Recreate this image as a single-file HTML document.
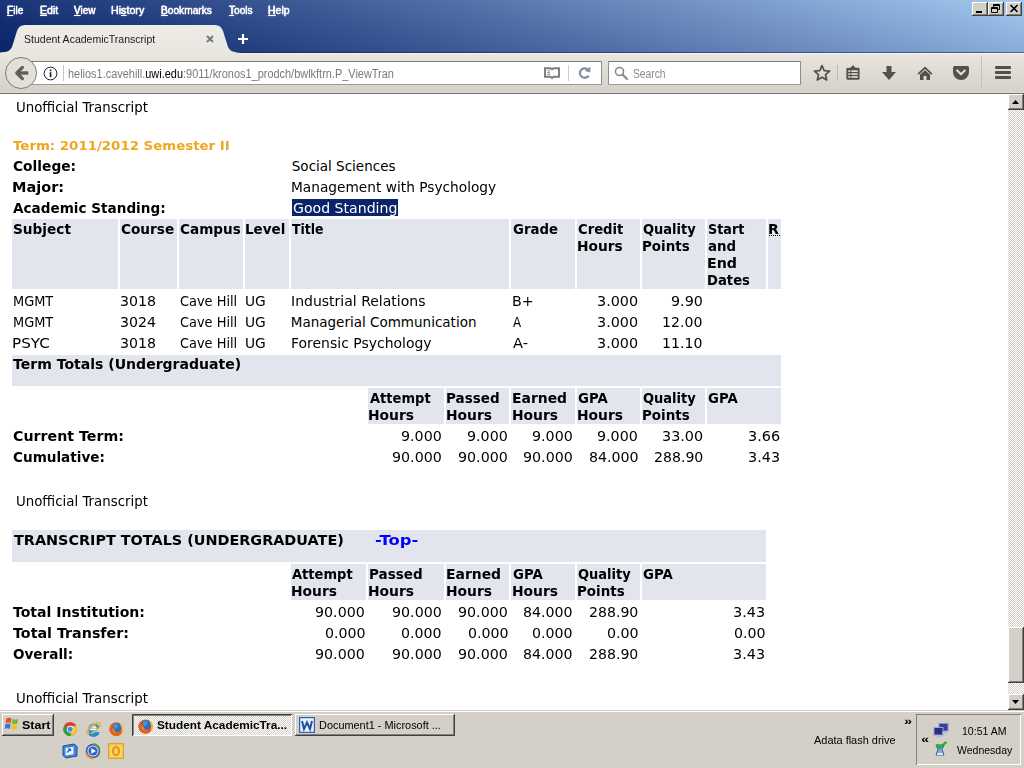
<!DOCTYPE html>
<html><head><meta charset="utf-8"><title>Student AcademicTranscript</title>
<style>
html,body{margin:0;padding:0;}
body{width:1024px;height:768px;overflow:hidden;position:relative;background:#fff;font-family:"DejaVu Sans","Liberation Sans",sans-serif;}
#chrome{position:absolute;left:0;top:0;width:1024px;height:94px;overflow:hidden;}
#titlegrad{position:absolute;left:0;top:0;width:1024px;height:53px;background:linear-gradient(16deg,#0a246a 0%,#142e72 10%,#213c7d 20%,#2f4b8a 30%,#3e5b97 40%,#4e6ca4 50%,#5f7eb3 60%,#7090c1 70%,#81a3d1 80%,#93b6e0 90%,#a6caf0 100%);}
.u{position:absolute;white-space:nowrap;transform-origin:0 0;font-family:"Liberation Sans","DejaVu Sans",sans-serif;font-size:11px;line-height:13px;color:#000;}
.menu{color:#fff;-webkit-text-stroke:0.3px #fff;text-shadow:0 0 1px rgba(255,255,255,.9),0 0 2px rgba(255,255,255,.35);}
.menu u{text-decoration:underline;text-decoration-thickness:1px;text-underline-offset:1px;}
#navbar{position:absolute;left:0;top:53px;width:1024px;height:40px;background:linear-gradient(to bottom,#e9e7e0 0%,#e3e1da 25%,#dddbd4 50%,#d8d6cf 75%,#d5d2cb 95%,#dedcd6 100%);border-bottom:1px solid #72706b;}
.field{position:absolute;top:61px;height:22px;background:#fff;border:1px solid #8f8d88;border-top-color:#7f7d78;border-bottom-color:#9c9a95;border-radius:1px;}
#content{position:absolute;left:0;top:94px;width:1008px;height:617px;background:#fff;overflow:hidden;}
.t{position:absolute;white-space:nowrap;transform-origin:0 0;font-size:13.5px;line-height:17px;color:#000;}
.b{font-weight:bold;}
.cap{color:#f0a521;}
.hc{position:absolute;background:#e3e5ee;}
#taskbar{position:absolute;left:0;top:710px;width:1024px;height:58px;background:#d4d0c8;border-top:1px solid #d4d0c8;box-shadow:inset 0 1px 0 #fff;}
.raised{position:absolute;background:#d4d0c8;box-shadow:inset -1px -1px 0 #404040,inset 1px 1px 0 #fff,inset -2px -2px 0 #808080,inset 2px 2px 0 #d4d0c8;}
.sunken{position:absolute;background:#d4d0c8;box-shadow:inset 1px 1px 0 #404040,inset -1px -1px 0 #fff,inset 2px 2px 0 #808080,inset -2px -2px 0 #d4d0c8;}
.checker{background-color:#fff;background-image:linear-gradient(45deg,#d4d0c8 25%,transparent 25%,transparent 75%,#d4d0c8 75%),linear-gradient(45deg,#d4d0c8 25%,transparent 25%,transparent 75%,#d4d0c8 75%);background-size:2px 2px;background-position:0 0,1px 1px;}
svg{position:absolute;overflow:visible;}
</style></head><body>
<div id="chrome">
<div id="titlegrad"></div>
<div class="raised" style="left:972px;top:2px;width:16px;height:14px"></div><div style="position:absolute;left:976px;top:11px;width:6px;height:2px;background:#000"></div>
<div class="raised" style="left:988px;top:2px;width:16px;height:14px"></div><svg style="left:991px;top:4px" width="10" height="10" viewBox="0 0 10 10"><path d="M2.5,0.5 h6 v5 h-6 z M2.5,1.5 h6" fill="none" stroke="#000" stroke-width="1"/><path d="M0.5,3.5 h6 v5 h-6 z" fill="#d4d0c8" stroke="#000"/><path d="M0.5,4.5 h6" stroke="#000"/></svg>
<div class="raised" style="left:1006px;top:2px;width:16px;height:14px"></div><svg style="left:1010px;top:5px" width="8" height="7" viewBox="0 0 8 7"><path d="M0.5,0 L7.5,7 M7.5,0 L0.5,7" stroke="#000" stroke-width="1.6" fill="none"/></svg>
<div class="u menu" style="left:7.30px;top:4px;transform:scaleX(0.9144);"><u>F</u>ile</div>
<div class="u menu" style="left:39.60px;top:4px;transform:scaleX(0.9578);"><u>E</u>dit</div>
<div class="u menu" style="left:73.80px;top:4px;transform:scaleX(0.9030);"><u>V</u>iew</div>
<div class="u menu" style="left:111.30px;top:4px;transform:scaleX(0.9705);">Hi<u>s</u>tory</div>
<div class="u menu" style="left:161.10px;top:4px;transform:scaleX(0.9241);"><u>B</u>ookmarks</div>
<div class="u menu" style="left:228.50px;top:4px;transform:scaleX(0.9206);"><u>T</u>ools</div>
<div class="u menu" style="left:268.10px;top:4px;transform:scaleX(0.9509);"><u>H</u>elp</div>
<svg style="left:0;top:0" width="260" height="60" viewBox="0 0 260 60"><defs><linearGradient id="tg" x1="0" y1="25" x2="0" y2="53" gradientUnits="userSpaceOnUse"><stop offset="0" stop-color="#eeece7"/><stop offset="1" stop-color="#e9e7e0"/></linearGradient></defs><path d="M0,53 L0,52.5 C7,52.2 10,51 12,47 L17,31 C18.5,27 21,25 26,25 L214,25 C219,25 221.5,27 223,31 L228,47 C230,51 233,52.2 240,52.5 L240,53 Z" fill="url(#tg)"/><path d="M207,36 L213,42 M213,36 L207,42" stroke="#7a7a7a" stroke-width="2" fill="none"/><path d="M243,34 V44 M238,39 H248" stroke="#fff" stroke-width="2.2" fill="none"/></svg>
<div class="u" style="left:23.60px;top:33px;transform:scaleX(0.9564);color:#1a1a1a">Student AcademicTranscript</div>
<div id="navbar"></div>
<div style="position:absolute;left:236px;top:52px;width:788px;height:1px;background:rgba(8,24,64,.5)"></div><div style="position:absolute;left:240px;top:53px;width:784px;height:1px;background:#f4f5f9"></div>
<div class="field" style="left:27px;width:573px"></div>
<div class="field" style="left:608px;width:191px"></div>
<svg style="left:4px;top:56px" width="34" height="34" viewBox="0 0 34 34"><circle cx="17" cy="17" r="15.5" fill="#e2e0d9" stroke="#7d7b76" stroke-width="1"/><path d="M24.3,17 H13.5" fill="none" stroke="#5f5d57" stroke-width="3.4" stroke-linecap="butt"/><path d="M18.4,11.4 L12.8,17 L18.4,22.6" fill="none" stroke="#5f5d57" stroke-width="3.2" stroke-linecap="round" stroke-linejoin="round"/></svg>
<svg style="left:42.6px;top:65.6px" width="15" height="15" viewBox="0 0 15 15"><circle cx="7.5" cy="7.5" r="6.4" fill="none" stroke="#222" stroke-width="1"/><rect x="6.7" y="6.2" width="1.7" height="5" fill="#222"/><rect x="6.7" y="3.5" width="1.7" height="1.7" fill="#222"/></svg>
<div style="position:absolute;left:63px;top:65px;width:1px;height:16px;background:#c8c6c2"></div>
<svg style="left:544px;top:67px" width="16" height="12" viewBox="0 0 16 12"><path d="M1,1.2 H6.4 L8,2.4 L9.6,1.2 H15 V9.8 H9.6 L8,11 L6.4,9.8 H1 Z" fill="none" stroke="#7b7b7b" stroke-width="1.9" stroke-linejoin="miter"/><path d="M3.4,3.9h2.6M3.4,5.6h2.6M3.4,7.3h2.6" stroke="#7b7b7b" stroke-width="0.9"/></svg>
<div style="position:absolute;left:568px;top:65px;width:1px;height:16px;background:#d0cec9"></div>
<svg style="left:578px;top:66px" width="14" height="14" viewBox="0 0 14 14"><path d="M10.6,9.6 A4.7,4.7 0 1 1 9.4,3.2" fill="none" stroke="#8691a6" stroke-width="2.3"/><path d="M6.8,4.9 L12.4,0.6 L12.4,6.6 Z" fill="#8691a6"/></svg>
<svg style="left:614px;top:66px" width="15" height="14" viewBox="0 0 15 14"><circle cx="5.5" cy="5.5" r="4" fill="none" stroke="#8a8a8a" stroke-width="1.6"/><path d="M8.5,8.5 L13,13" stroke="#8a8a8a" stroke-width="2.2" stroke-linecap="round"/></svg>
<svg style="left:813px;top:64px" width="18" height="18" viewBox="0 0 18 18"><path d="M9,1.6 L11.2,6.6 L16.6,7.1 L12.5,10.7 L13.7,16 L9,13.2 L4.3,16 L5.5,10.7 L1.4,7.1 L6.8,6.6 Z" fill="none" stroke="#53514a" stroke-width="1.7" stroke-linejoin="round"/></svg>
<div style="position:absolute;left:837px;top:65px;width:1px;height:16px;background:#b9b7b2"></div>
<svg style="left:846px;top:65px" width="14" height="15" viewBox="0 0 14 15"><rect x="0.4" y="2.8" width="13.2" height="12" rx="1.4" fill="#53514a"/><path d="M4.3,3 L7,0.1 L9.7,3 Z" fill="#53514a"/><rect x="2.3" y="5.3" width="9.4" height="1.7" fill="#dfddd6"/><rect x="2.3" y="8.2" width="9.4" height="1.7" fill="#dfddd6"/><rect x="2.3" y="11.1" width="9.4" height="1.7" fill="#dfddd6"/><rect x="4.3" y="5" width="1" height="8" fill="#53514a"/></svg>
<svg style="left:882px;top:66px" width="14" height="14" viewBox="0 0 14 14"><path d="M4.5,0 H9.5 V6 H14 L7,14 L0,6 H4.5 Z" fill="#53514a"/></svg>
<svg style="left:917px;top:66px" width="16" height="14" viewBox="0 0 16 14"><path d="M8,0.5 L15.5,7.5 L14.3,8.7 L8,3 L1.7,8.7 L0.5,7.5 Z" fill="#53514a"/><path d="M3,8.5 L8,4.2 L13,8.5 V14 H9.5 V10 H6.5 V14 H3 Z" fill="#53514a"/></svg>
<svg style="left:953px;top:66px" width="16" height="14" viewBox="0 0 16 14"><path d="M1.5,0 H14.5 Q16,0 16,1.5 V6 A8,8 0 0 1 0,6 V1.5 Q0,0 1.5,0 Z" fill="#53514a"/><path d="M4.2,4.5 L8,8.3 L11.8,4.5" fill="none" stroke="#dddbd4" stroke-width="2.2" stroke-linecap="round" stroke-linejoin="round"/></svg>
<div style="position:absolute;left:981px;top:56px;width:1px;height:32px;background:#c4c2bd"></div>
<div style="position:absolute;left:995px;top:66px;width:16px;height:3px;background:#53514a;border-radius:1px;box-shadow:0 5px 0 #53514a,0 10px 0 #53514a"></div>
<div class="u" style="left:68.30px;top:68px;font-size:12px;transform:scaleX(0.9121);color:#7a7a7a">helios1.cavehill.<span style="color:#000">uwi.edu</span>:9011/kronos1_prodch/bwlkftrn.P_ViewTran</div>
<div class="u" style="left:632.90px;top:68px;font-size:12px;transform:scaleX(0.8568);color:#8a8a8a">Search</div>
</div>
<div id="content">
<div class="hc" style="left:292px;top:105px;width:106px;height:17px;background:#0a246a"></div>
<div class="hc" style="left:12px;top:125px;width:106px;height:70px"></div>
<div class="hc" style="left:120px;top:125px;width:57px;height:70px"></div>
<div class="hc" style="left:179px;top:125px;width:64px;height:70px"></div>
<div class="hc" style="left:245px;top:125px;width:43.5px;height:70px"></div>
<div class="hc" style="left:291px;top:125px;width:218px;height:70px"></div>
<div class="hc" style="left:511px;top:125px;width:63.5px;height:70px"></div>
<div class="hc" style="left:577px;top:125px;width:63px;height:70px"></div>
<div class="hc" style="left:642px;top:125px;width:62.5px;height:70px"></div>
<div class="hc" style="left:706.5px;top:125px;width:59.0px;height:70px"></div>
<div class="hc" style="left:768px;top:125px;width:12.5px;height:70px"></div>
<div style="position:absolute;left:769px;top:141px;width:11px;height:0;border-top:1px dotted #000"></div>
<div class="hc" style="left:12px;top:260.5px;width:768.5px;height:31.0px"></div>
<div class="hc" style="left:368px;top:294px;width:75.5px;height:36px"></div>
<div class="hc" style="left:446px;top:294px;width:63px;height:36px"></div>
<div class="hc" style="left:511px;top:294px;width:63.5px;height:36px"></div>
<div class="hc" style="left:577px;top:294px;width:63px;height:36px"></div>
<div class="hc" style="left:642px;top:294px;width:62.5px;height:36px"></div>
<div class="hc" style="left:706.5px;top:294px;width:74.0px;height:36px"></div>
<div class="hc" style="left:12px;top:436px;width:754px;height:31.5px"></div>
<div class="hc" style="left:291px;top:470px;width:75px;height:36px"></div>
<div class="hc" style="left:368px;top:470px;width:75.5px;height:36px"></div>
<div class="hc" style="left:446px;top:470px;width:63px;height:36px"></div>
<div class="hc" style="left:511px;top:470px;width:63.5px;height:36px"></div>
<div class="hc" style="left:577px;top:470px;width:63px;height:36px"></div>
<div class="hc" style="left:642px;top:470px;width:124px;height:36px"></div>
<div class="t" style="left:15.91px;top:5px;transform:scaleX(0.9879);">Unofficial Transcript</div>
<div class="t b cap" style="left:13.40px;top:43px;font-size:12.6px;transform:scaleX(1.0593);">Term: 2011/2012 Semester II</div>
<div class="t b" style="left:13.40px;top:64px;transform:scaleX(1.0213);">College:</div>
<div class="t" style="left:291.80px;top:64px;">Social Sciences</div>
<div class="t b" style="left:12.33px;top:85px;transform:scaleX(1.0737);">Major:</div>
<div class="t" style="left:290.78px;top:85px;transform:scaleX(1.0164);">Management with Psychology</div>
<div class="t b" style="left:13.40px;top:106px;transform:scaleX(1.0064);">Academic Standing:</div>
<div class="t" style="left:292.60px;top:106px;transform:scaleX(1.0442);color:#fff">Good Standing</div>
<div class="t b" style="left:13.30px;top:127px;transform:scaleX(1.0124);">Subject</div>
<div class="t b" style="left:121.00px;top:127px;transform:scaleX(1.0098);">Course</div>
<div class="t b" style="left:179.80px;top:127px;transform:scaleX(1.0057);">Campus</div>
<div class="t b" style="left:244.90px;top:127px;transform:scaleX(1.0022);">Level</div>
<div class="t b" style="left:291.80px;top:127px;transform:scaleX(0.9258);">Title</div>
<div class="t b" style="left:512.70px;top:127px;transform:scaleX(0.9844);">Grade</div>
<div class="t b" style="left:577.90px;top:127px;transform:scaleX(0.9763);">Credit</div>
<div class="t b" style="left:576.88px;top:144px;transform:scaleX(1.0196);">Hours</div>
<div class="t b" style="left:642.50px;top:127px;transform:scaleX(0.9635);">Quality</div>
<div class="t b" style="left:641.50px;top:144px;transform:scaleX(0.9966);">Points</div>
<div class="t b" style="left:707.60px;top:127px;transform:scaleX(0.9450);">Start</div>
<div class="t b" style="left:707.60px;top:144px;transform:scaleX(0.9884);">and</div>
<div class="t b" style="left:706.55px;top:161px;transform:scaleX(1.0547);">End</div>
<div class="t b" style="left:706.62px;top:178px;transform:scaleX(0.9761);">Dates</div>
<div class="t b" style="left:768.25px;top:127px;transform:scaleX(1.0500);">R</div>
<div class="t" style="left:12.64px;top:199px;transform:scaleX(0.9579);">MGMT</div>
<div class="t" style="left:120.15px;top:199px;transform:scaleX(1.0468);">3018</div>
<div class="t" style="left:180.00px;top:199px;transform:scaleX(0.9586);">Cave Hill</div>
<div class="t" style="left:244.88px;top:199px;transform:scaleX(1.0222);">UG</div>
<div class="t" style="left:290.76px;top:199px;transform:scaleX(1.0376);">Industrial Relations</div>
<div class="t" style="left:511.64px;top:199px;transform:scaleX(1.0569);">B+</div>
<div class="t" style="left:596.74px;top:199px;transform:scaleX(1.0632);">3.000</div>
<div class="t" style="left:671.00px;top:199px;transform:scaleX(1.0587);">9.90</div>
<div class="t" style="left:12.64px;top:220px;transform:scaleX(0.9579);">MGMT</div>
<div class="t" style="left:120.15px;top:220px;transform:scaleX(1.0468);">3024</div>
<div class="t" style="left:180.00px;top:220px;transform:scaleX(0.9586);">Cave Hill</div>
<div class="t" style="left:244.88px;top:220px;transform:scaleX(1.0222);">UG</div>
<div class="t" style="left:290.80px;top:220px;">Managerial Communication</div>
<div class="t" style="left:512.70px;top:220px;transform:scaleX(0.8800);">A</div>
<div class="t" style="left:596.74px;top:220px;transform:scaleX(1.0632);">3.000</div>
<div class="t" style="left:662.46px;top:220px;transform:scaleX(1.0443);">12.00</div>
<div class="t" style="left:12.48px;top:241px;transform:scaleX(1.1236);">PSYC</div>
<div class="t" style="left:120.15px;top:241px;transform:scaleX(1.0468);">3018</div>
<div class="t" style="left:180.00px;top:241px;transform:scaleX(0.9586);">Cave Hill</div>
<div class="t" style="left:244.88px;top:241px;transform:scaleX(1.0222);">UG</div>
<div class="t" style="left:290.77px;top:241px;transform:scaleX(1.0348);">Forensic Psychology</div>
<div class="t" style="left:512.70px;top:241px;transform:scaleX(1.0833);">A-</div>
<div class="t" style="left:596.74px;top:241px;transform:scaleX(1.0632);">3.000</div>
<div class="t" style="left:662.46px;top:241px;transform:scaleX(1.0443);">11.10</div>
<div class="t b" style="left:13.40px;top:262px;transform:scaleX(1.0399);">Term Totals (Undergraduate)</div>
<div class="t b" style="left:369.50px;top:296px;transform:scaleX(0.9677);">Attempt</div>
<div class="t b" style="left:368.47px;top:313px;transform:scaleX(1.0264);">Hours</div>
<div class="t b" style="left:446.10px;top:296px;transform:scaleX(1.0025);">Passed</div>
<div class="t b" style="left:446.07px;top:313px;transform:scaleX(1.0264);">Hours</div>
<div class="t b" style="left:511.77px;top:296px;transform:scaleX(1.0298);">Earned</div>
<div class="t b" style="left:511.77px;top:313px;transform:scaleX(1.0264);">Hours</div>
<div class="t b" style="left:578.00px;top:296px;transform:scaleX(0.9858);">GPA</div>
<div class="t b" style="left:576.97px;top:313px;transform:scaleX(1.0264);">Hours</div>
<div class="t b" style="left:642.50px;top:296px;transform:scaleX(0.9635);">Quality</div>
<div class="t b" style="left:641.50px;top:313px;transform:scaleX(0.9966);">Points</div>
<div class="t b" style="left:707.60px;top:296px;transform:scaleX(0.9858);">GPA</div>
<div class="t b" style="left:13.40px;top:334px;transform:scaleX(1.0524);">Current Term:</div>
<div class="t b" style="left:13.40px;top:355px;transform:scaleX(1.0059);">Cumulative:</div>
<div class="t" style="left:401.00px;top:334px;transform:scaleX(1.0563);">9.000</div>
<div class="t" style="left:467.30px;top:334px;transform:scaleX(1.0563);">9.000</div>
<div class="t" style="left:532.10px;top:334px;transform:scaleX(1.0563);">9.000</div>
<div class="t" style="left:597.30px;top:334px;transform:scaleX(1.0563);">9.000</div>
<div class="t" style="left:661.74px;top:334px;transform:scaleX(1.0632);">33.00</div>
<div class="t" style="left:748.03px;top:334px;transform:scaleX(1.0678);">3.66</div>
<div class="t" style="left:392.00px;top:355px;transform:scaleX(1.0547);">90.000</div>
<div class="t" style="left:458.30px;top:355px;transform:scaleX(1.0547);">90.000</div>
<div class="t" style="left:523.10px;top:355px;transform:scaleX(1.0547);">90.000</div>
<div class="t" style="left:588.50px;top:355px;transform:scaleX(1.0504);">84.000</div>
<div class="t" style="left:653.50px;top:355px;transform:scaleX(1.0440);">288.90</div>
<div class="t" style="left:748.03px;top:355px;transform:scaleX(1.0678);">3.43</div>
<div class="t" style="left:15.91px;top:399px;transform:scaleX(0.9879);">Unofficial Transcript</div>
<div class="t b" style="left:14.20px;top:438px;transform:scaleX(1.0657);">TRANSCRIPT TOTALS (UNDERGRADUATE)</div>
<div class="t b" style="left:374.90px;top:438px;transform:scaleX(1.2152);color:#0000ff">-Top-</div>
<div class="t b" style="left:291.80px;top:472px;transform:scaleX(0.9677);">Attempt</div>
<div class="t b" style="left:290.77px;top:489px;transform:scaleX(1.0264);">Hours</div>
<div class="t b" style="left:368.50px;top:472px;transform:scaleX(1.0025);">Passed</div>
<div class="t b" style="left:368.47px;top:489px;transform:scaleX(1.0264);">Hours</div>
<div class="t b" style="left:446.07px;top:472px;transform:scaleX(1.0298);">Earned</div>
<div class="t b" style="left:446.07px;top:489px;transform:scaleX(1.0264);">Hours</div>
<div class="t b" style="left:512.80px;top:472px;transform:scaleX(0.9858);">GPA</div>
<div class="t b" style="left:511.77px;top:489px;transform:scaleX(1.0264);">Hours</div>
<div class="t b" style="left:578.00px;top:472px;transform:scaleX(0.9635);">Quality</div>
<div class="t b" style="left:577.00px;top:489px;transform:scaleX(0.9966);">Points</div>
<div class="t b" style="left:642.50px;top:472px;transform:scaleX(0.9858);">GPA</div>
<div class="t b" style="left:13.40px;top:510px;transform:scaleX(1.0410);">Total Institution:</div>
<div class="t b" style="left:13.40px;top:531px;transform:scaleX(1.0562);">Total Transfer:</div>
<div class="t b" style="left:13.40px;top:552px;transform:scaleX(1.0042);">Overall:</div>
<div class="t" style="left:315.30px;top:510px;transform:scaleX(1.0547);">90.000</div>
<div class="t" style="left:392.00px;top:510px;transform:scaleX(1.0547);">90.000</div>
<div class="t" style="left:458.30px;top:510px;transform:scaleX(1.0547);">90.000</div>
<div class="t" style="left:523.30px;top:510px;transform:scaleX(1.0504);">84.000</div>
<div class="t" style="left:588.80px;top:510px;transform:scaleX(1.0440);">288.90</div>
<div class="t" style="left:733.03px;top:510px;transform:scaleX(1.0678);">3.43</div>
<div class="t" style="left:324.50px;top:531px;transform:scaleX(1.0510);">0.000</div>
<div class="t" style="left:401.20px;top:531px;transform:scaleX(1.0510);">0.000</div>
<div class="t" style="left:467.50px;top:531px;transform:scaleX(1.0510);">0.000</div>
<div class="t" style="left:532.30px;top:531px;transform:scaleX(1.0510);">0.000</div>
<div class="t" style="left:606.50px;top:531px;transform:scaleX(1.0519);">0.00</div>
<div class="t" style="left:733.50px;top:531px;transform:scaleX(1.0519);">0.00</div>
<div class="t" style="left:315.30px;top:552px;transform:scaleX(1.0547);">90.000</div>
<div class="t" style="left:392.00px;top:552px;transform:scaleX(1.0547);">90.000</div>
<div class="t" style="left:458.30px;top:552px;transform:scaleX(1.0547);">90.000</div>
<div class="t" style="left:523.30px;top:552px;transform:scaleX(1.0504);">84.000</div>
<div class="t" style="left:588.80px;top:552px;transform:scaleX(1.0440);">288.90</div>
<div class="t" style="left:733.03px;top:552px;transform:scaleX(1.0678);">3.43</div>
<div class="t" style="left:15.91px;top:596px;transform:scaleX(0.9879);">Unofficial Transcript</div>
</div>
<div class="checker" style="position:absolute;left:1008px;top:94px;width:16px;height:617px"></div>
<div class="raised" style="left:1008px;top:94px;width:16px;height:16px"></div><svg style="left:1012px;top:100px" width="7" height="4" viewBox="0 0 7 4"><path d="M0,4 L3.5,0 L7,4 Z" fill="#000"/></svg>
<div class="raised" style="left:1008px;top:627px;width:16px;height:56px"></div>
<div class="raised" style="left:1008px;top:694px;width:16px;height:16px"></div><svg style="left:1012px;top:700px" width="7" height="4" viewBox="0 0 7 4"><path d="M0,0 L3.5,4 L7,0 Z" fill="#000"/></svg>
<div id="taskbar"></div>
<div class="raised" style="left:2px;top:714px;width:52px;height:22px"></div>
<svg style="left:4.6px;top:716px" width="15" height="15.5" viewBox="0 0 14 15"><path d="M1,2.5 Q3.5,1 6,2.5 L5.3,7 Q3,5.7 0.3,7 Z" fill="#e8502a"/><path d="M7,2.8 Q9.5,4.2 12.5,2.6 L11.8,7.2 Q9,8.6 6.3,7.2 Z" fill="#7bb53a"/><path d="M0.1,8 Q2.8,6.7 5.1,8 L4.4,12.6 Q2,11.2 -0.6,12.6 Z" fill="#3a78d8"/><path d="M6.1,8.3 Q8.8,9.7 11.6,8.3 L10.9,12.8 Q8,14.2 5.4,12.8 Z" fill="#f2c12a"/></svg>
<div class="sunken checker" style="left:132px;top:714px;width:160px;height:22px;box-shadow:inset 1px 1px 0 #404040,inset -1px -1px 0 #fff,inset 2px 2px 0 #808080"></div>
<div class="raised" style="left:295px;top:714px;width:160px;height:22px"></div>
<svg style="left:62.8px;top:721.8px" width="14.4" height="14.4" viewBox="0 0 16 16"><circle cx="8" cy="8" r="7.6" fill="#de3c30"/><path d="M8,8 L1.42,4.2 A7.6,7.6 0 0 0 8.8,15.56 L11.5,9.8 Z" fill="#2a9e48"/><path d="M8,8 L8.8,15.56 A7.6,7.6 0 0 0 14.58,4.2 L8,4.2 Z" fill="#f5c528"/><path d="M1.42,4.2 A7.6,7.6 0 0 1 14.58,4.2 L8,4.2 Z" fill="#de3c30"/><circle cx="8" cy="8" r="3.7" fill="#f4f4f4"/><circle cx="8" cy="8" r="2.8" fill="#4a86e8"/></svg>
<svg style="left:86.0px;top:721.3px" width="15.4" height="15.4" viewBox="0 0 16 16"><circle cx="8.4" cy="8.8" r="6.2" fill="#1f8ade"/><circle cx="7.6" cy="7.6" r="3.6" fill="#3fa6ee"/><ellipse cx="8.6" cy="6.6" rx="2.5" ry="1.3" fill="#d9eefc"/><rect x="4.2" y="7.9" width="10.6" height="1.7" fill="#e6f3fd"/><rect x="10" y="9.6" width="5.5" height="1.9" fill="#d4d0c8"/><ellipse cx="8" cy="7.8" rx="8.6" ry="3.3" fill="none" stroke="#efb325" stroke-width="1.7" transform="rotate(-38 8 7.8)"/><path d="M3.2,13.2 A6.2,6.2 0 0 0 13,12.6" fill="none" stroke="#1f8ade" stroke-width="2.4"/></svg>
<svg style="left:108.8px;top:721.8px" width="14.4" height="14.4" viewBox="0 0 16 16"><circle cx="8" cy="8" r="7.6" fill="#e4571c"/><circle cx="8.8" cy="6.3" r="5" fill="#2c6ec2"/><circle cx="7.6" cy="4.8" r="2.6" fill="#3f97dc"/><path d="M0.6,6.5 Q0.2,12.5 6,15.2 Q11.5,16.6 14.6,11.6 Q10.5,13 7.6,11.3 Q5.2,9.6 6.2,7.2 Q4,7.2 3.2,4.6 Q1.2,4.6 0.6,6.5 Z" fill="#e8601c"/><path d="M3.4,8.6 Q5,12.6 9.5,12.6 Q6,11.6 5.6,8.2 Z" fill="#f0901c"/><path d="M13.2,3 Q15.8,6.5 14.4,11.4" fill="none" stroke="#f2bc22" stroke-width="1.7" stroke-linecap="round"/></svg>
<svg style="left:62px;top:743px" width="16" height="16" viewBox="0 0 16 16"><path d="M1,3 L12,1 L15,3.5 V13 L4,15 L1,12.5 Z" fill="#3f86d8" stroke="#1d4f98" stroke-width="1"/><path d="M3.5,5 L11.5,3.8 V11.2 L3.5,12.4 Z" fill="#eaf2fc"/><path d="M5,9.5 L8.5,6 M8.5,6 H6.3 M8.5,6 V8.3" stroke="#2a64b8" stroke-width="1.4" fill="none"/></svg>
<svg style="left:85px;top:743px" width="16" height="16" viewBox="0 0 16 16"><circle cx="8" cy="8" r="7.3" fill="#48608c"/><circle cx="8" cy="8" r="5.6" fill="#dfe6f2"/><circle cx="8" cy="8" r="4.6" fill="#2f62c8"/><path d="M6.3,5.2 L11,8 L6.3,10.8 Z" fill="#fff"/><path d="M1.5,10.5 A7.3,7.3 0 0 0 8,15.3" stroke="#e08a2a" stroke-width="1.6" fill="none"/><path d="M14.5,5.5 A7.3,7.3 0 0 0 8,0.7" stroke="#5aa83a" stroke-width="1.6" fill="none"/></svg>
<svg style="left:108px;top:743px" width="16" height="16" viewBox="0 0 16 16"><rect x="0.7" y="0.7" width="14.6" height="14.6" fill="#f7d667" stroke="#e0a326" stroke-width="1.4"/><ellipse cx="8" cy="8" rx="3" ry="4.2" fill="none" stroke="#e09a1a" stroke-width="2.2"/></svg>
<svg style="left:137.5px;top:718.5px" width="15.0" height="15.0" viewBox="0 0 16 16"><circle cx="8" cy="8" r="7.6" fill="#e4571c"/><circle cx="8.8" cy="6.3" r="5" fill="#2c6ec2"/><circle cx="7.6" cy="4.8" r="2.6" fill="#3f97dc"/><path d="M0.6,6.5 Q0.2,12.5 6,15.2 Q11.5,16.6 14.6,11.6 Q10.5,13 7.6,11.3 Q5.2,9.6 6.2,7.2 Q4,7.2 3.2,4.6 Q1.2,4.6 0.6,6.5 Z" fill="#e8601c"/><path d="M3.4,8.6 Q5,12.6 9.5,12.6 Q6,11.6 5.6,8.2 Z" fill="#f0901c"/><path d="M13.2,3 Q15.8,6.5 14.4,11.4" fill="none" stroke="#f2bc22" stroke-width="1.7" stroke-linecap="round"/></svg>
<svg style="left:299px;top:717px" width="16" height="16" viewBox="0 0 16 16"><rect x="0.6" y="0.6" width="14.8" height="14.8" fill="#e9f0fb" stroke="#2f62b2" stroke-width="1.2"/><path d="M3,4 L5,12 L8,5.5 L11,12 L13,4" fill="none" stroke="#1f4fa8" stroke-width="2" stroke-linejoin="miter"/></svg>
<div style="position:absolute;left:916px;top:714px;width:105px;height:51px;box-shadow:inset 1px 1px 0 #808080,inset -1px -1px 0 #fff"></div>
<svg style="left:933px;top:723px" width="16" height="16" viewBox="0 0 16 16"><rect x="6" y="0.5" width="9" height="7.5" fill="#3a3f9a" stroke="#8d93d8" stroke-width="1"/><rect x="1" y="4.5" width="9" height="7.5" fill="#2a2f7a" stroke="#9aa0e0" stroke-width="1"/><rect x="3" y="12.5" width="6" height="2" fill="#b8bce8"/><rect x="9" y="9" width="5" height="1.6" fill="#b8bce8"/></svg>
<svg style="left:933px;top:741px" width="16" height="16" viewBox="0 0 16 16"><path d="M3,4 H11 L9,8.5 L11,14 H3 L5,8.5 Z" fill="#8aa8e0" stroke="#3858a8" stroke-width="1"/><path d="M4,13h6" stroke="#dfe8f8" stroke-width="2"/><path d="M3.5,3.5 L6.5,7 L13.5,0.8" fill="none" stroke="#28b428" stroke-width="2.4"/></svg>
<div class="u b" style="left:21.60px;top:719px;transform:scaleX(1.1339);">Start</div>
<div class="u b" style="left:156.60px;top:719px;transform:scaleX(1.0733);">Student AcademicTra...</div>
<div class="u" style="left:318.60px;top:719px;transform:scaleX(0.9918);">Document1 - Microsoft ...</div>
<div class="u" style="left:813.80px;top:734px;transform:scaleX(0.9949);">Adata flash drive</div>
<div class="u" style="left:962.30px;top:725px;transform:scaleX(0.9569);">10:51 AM</div>
<div class="u" style="left:957.00px;top:744px;transform:scaleX(0.9556);">Wednesday</div>
<div class="u b" style="left:904.00px;top:715px;transform:scaleX(1.3333);">»</div>
<div class="u b" style="left:921.00px;top:733px;transform:scaleX(1.3333);">«</div>
</body></html>
